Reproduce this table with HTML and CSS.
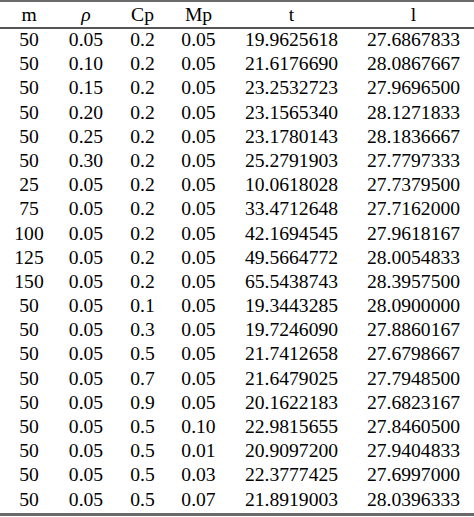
FILE: index.html
```html
<!DOCTYPE html>
<html>
<head>
<meta charset="utf-8">
<link rel="stylesheet" href="styles.css">
</head>
<body>
<div class="table">
  <div class="row head">
    <span>m</span><span><i>ρ</i></span><span>Cp</span><span>Mp</span><span>t</span><span>l</span>
  </div>
  <div class="body">
    <div class="row"><span>50</span><span>0.05</span><span>0.2</span><span>0.05</span><span>19.9625618</span><span>27.6867833</span></div>
    <div class="row"><span>50</span><span>0.10</span><span>0.2</span><span>0.05</span><span>21.6176690</span><span>28.0867667</span></div>
    <div class="row"><span>50</span><span>0.15</span><span>0.2</span><span>0.05</span><span>23.2532723</span><span>27.9696500</span></div>
    <div class="row"><span>50</span><span>0.20</span><span>0.2</span><span>0.05</span><span>23.1565340</span><span>28.1271833</span></div>
    <div class="row"><span>50</span><span>0.25</span><span>0.2</span><span>0.05</span><span>23.1780143</span><span>28.1836667</span></div>
    <div class="row"><span>50</span><span>0.30</span><span>0.2</span><span>0.05</span><span>25.2791903</span><span>27.7797333</span></div>
    <div class="row"><span>25</span><span>0.05</span><span>0.2</span><span>0.05</span><span>10.0618028</span><span>27.7379500</span></div>
    <div class="row"><span>75</span><span>0.05</span><span>0.2</span><span>0.05</span><span>33.4712648</span><span>27.7162000</span></div>
    <div class="row"><span>100</span><span>0.05</span><span>0.2</span><span>0.05</span><span>42.1694545</span><span>27.9618167</span></div>
    <div class="row"><span>125</span><span>0.05</span><span>0.2</span><span>0.05</span><span>49.5664772</span><span>28.0054833</span></div>
    <div class="row"><span>150</span><span>0.05</span><span>0.2</span><span>0.05</span><span>65.5438743</span><span>28.3957500</span></div>
    <div class="row"><span>50</span><span>0.05</span><span>0.1</span><span>0.05</span><span>19.3443285</span><span>28.0900000</span></div>
    <div class="row"><span>50</span><span>0.05</span><span>0.3</span><span>0.05</span><span>19.7246090</span><span>27.8860167</span></div>
    <div class="row"><span>50</span><span>0.05</span><span>0.5</span><span>0.05</span><span>21.7412658</span><span>27.6798667</span></div>
    <div class="row"><span>50</span><span>0.05</span><span>0.7</span><span>0.05</span><span>21.6479025</span><span>27.7948500</span></div>
    <div class="row"><span>50</span><span>0.05</span><span>0.9</span><span>0.05</span><span>20.1622183</span><span>27.6823167</span></div>
    <div class="row"><span>50</span><span>0.05</span><span>0.5</span><span>0.10</span><span>22.9815655</span><span>27.8460500</span></div>
    <div class="row"><span>50</span><span>0.05</span><span>0.5</span><span>0.01</span><span>20.9097200</span><span>27.9404833</span></div>
    <div class="row"><span>50</span><span>0.05</span><span>0.5</span><span>0.03</span><span>22.3777425</span><span>27.6997000</span></div>
    <div class="row"><span>50</span><span>0.05</span><span>0.5</span><span>0.07</span><span>21.8919003</span><span>28.0396333</span></div>
  </div>
</div>
</body>
</html>
```
FILE: styles.css
```css
html, body {
  margin: 0;
  padding: 0;
  background: #ffffff;
}
body {
  width: 474px;
  height: 517px;
  overflow: hidden;
}
.table {
  font-family: "Liberation Serif", "Times New Roman", serif;
  font-size: 19.6px;
  color: #000000;
  border-top: 2px solid #6a6a6a;
  border-bottom: 3px solid #6a6a6a;
  width: 474px;
  box-sizing: border-box;
}
.row {
  display: grid;
  grid-template-columns: 58px 56px 57px 55px 131px 113px;
  height: 24.2px;
  line-height: 22.2px;
  padding-bottom: 2px;
  box-sizing: border-box;
  text-align: center;
  white-space: nowrap;
}
.row.head {
  height: 25px;
  line-height: 25px;
  padding-bottom: 0;
  border-bottom: 2px solid #555555;
  box-sizing: content-box;
}
.head i {
  font-style: italic;
}
.body {
  display: flex;
  flex-direction: column;
}
```
